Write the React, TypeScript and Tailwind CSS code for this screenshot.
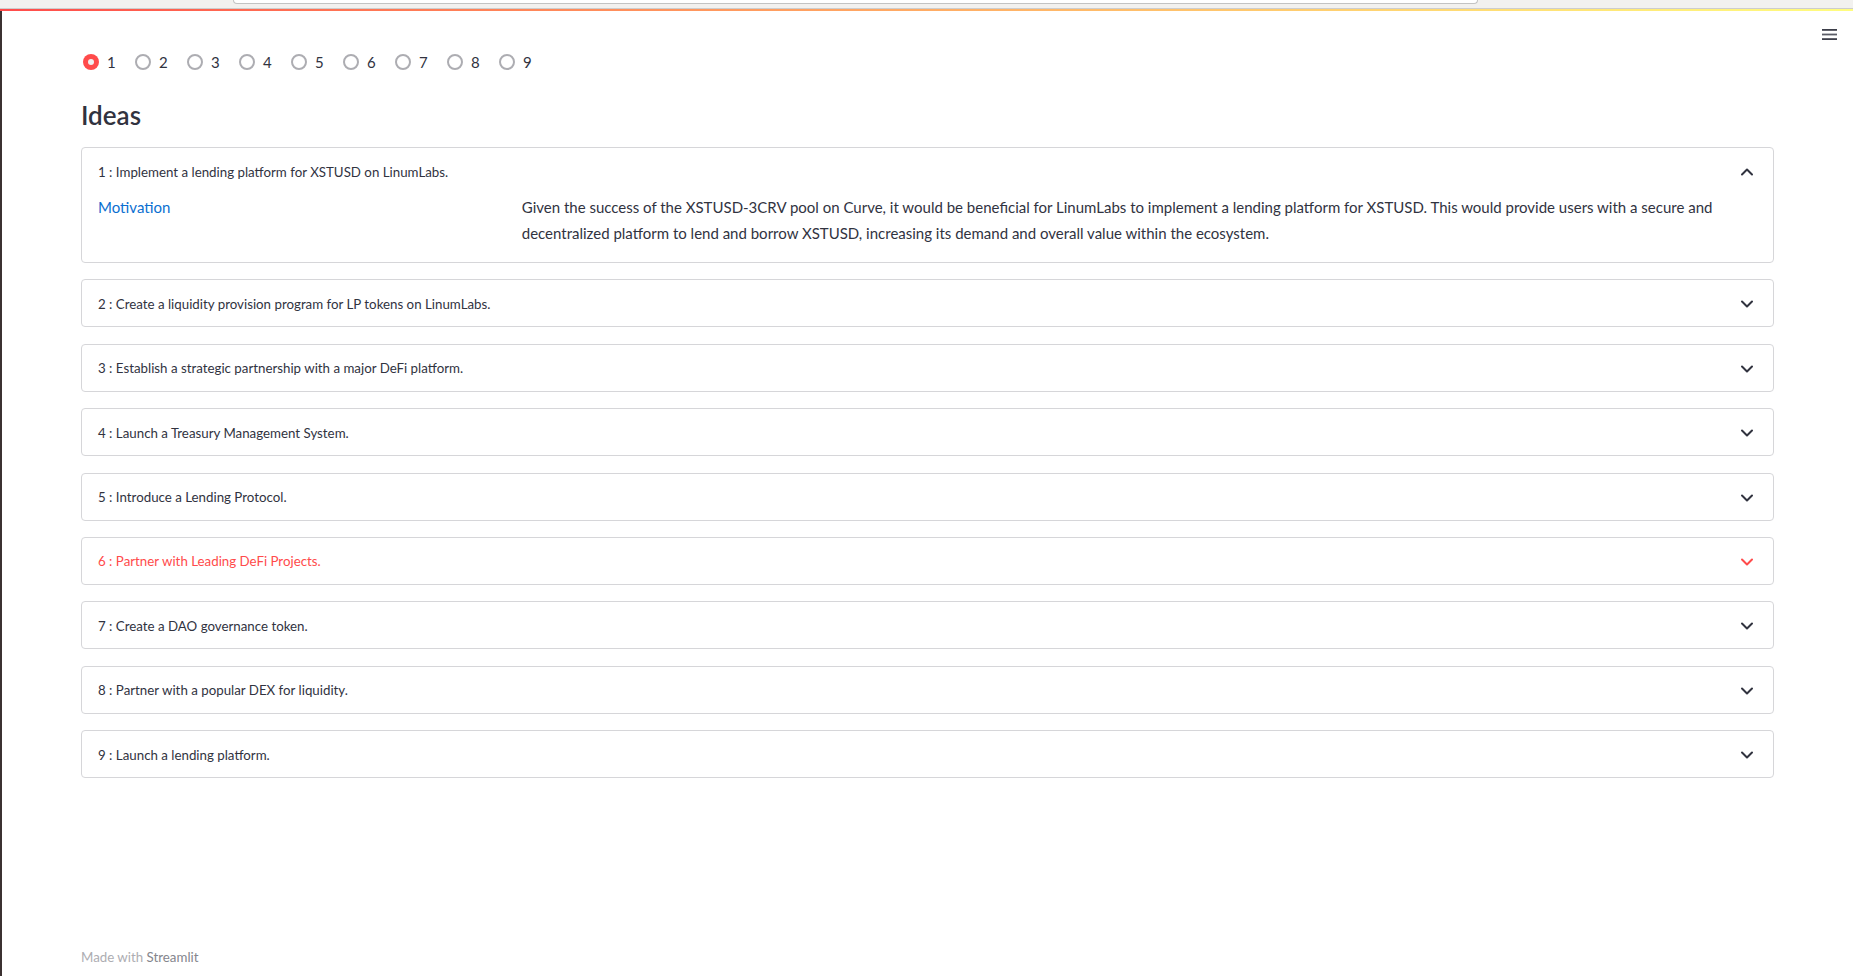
import { ChevronDown, ChevronUp } from 'lucide-react';

const ideas = [
  'Implement a lending platform for XSTUSD on LinumLabs.',
  'Create a liquidity provision program for LP tokens on LinumLabs.',
  'Establish a strategic partnership with a major DeFi platform.',
  'Launch a Treasury Management System.',
  'Introduce a Lending Protocol.',
  'Partner with Leading DeFi Projects.',
  'Create a DAO governance token.',
  'Partner with a popular DEX for liquidity.',
  'Launch a lending platform.',
];

const motivation =
  'Given the success of the XSTUSD-3CRV pool on Curve, it would be beneficial for LinumLabs to implement a lending platform for XSTUSD. This would provide users with a secure and decentralized platform to lend and borrow XSTUSD, increasing its demand and overall value within the ecosystem.';

function RadioRow() {
  return (
    <div className="flex items-center gap-[19px] pl-[2px]">
      {ideas.map((_, i) => (
        <div key={i} className="flex items-center gap-[8px] h-6">
          {i === 0 ? (
            <span className="w-4 h-4 rounded-full bg-[#ff4b4b] flex items-center justify-center">
              <span className="w-[6px] h-[6px] rounded-full bg-[#f0f0f0]" />
            </span>
          ) : (
            <span className="w-4 h-4 rounded-full border-2 border-[#adadb2]" />
          )}
          <span className="text-[15px] leading-6 text-[#31333f] w-[9px]">{i + 1}</span>
        </div>
      ))}
    </div>
  );
}

function Expander({ index, title }: { index: number; title: string }) {
  const open = index === 0;
  const hover = index === 5;
  return (
    <div className="border border-[#d6d6d9] rounded-[4px] bg-white">
      <div
        className={`h-[46px] px-4 pt-[3px] flex items-center justify-between text-[13.3px] ${
          hover ? 'text-[#ff4b4b]' : 'text-[#31333f]'
        }`}
      >
        <span>
          {index + 1} : {title}
        </span>
        {open ? (
          <ChevronUp size={20} strokeWidth={2.4} className="text-[#31333f] -mt-[1px]" />
        ) : (
          <ChevronDown size={20} strokeWidth={2.4} className={hover ? 'text-[#ff4b4b] -mt-[1px]' : 'text-[#31333f] -mt-[1px]'} />
        )}
      </div>
      {open && (
        <div className="px-4 pb-[16px] grid grid-cols-[1fr_3fr] gap-3 text-[15px] leading-[26px]">
          <div className="text-[#0b6fd1]">Motivation</div>
          <p className="text-[#31333f]">{motivation}</p>
        </div>
      )}
    </div>
  );
}

export default function App() {
  return (
    <div className="h-screen flex flex-col bg-white font-['Lato',sans-serif] overflow-hidden">
      {/* browser chrome strip */}
      <div className="h-[8px] bg-[#f2f1ef] flex pl-[233px] shrink-0">
        <div className="w-[1245px] h-[4px] border-x border-b border-[#c3c3c3] rounded-b-[4px] bg-white" />
      </div>
      <div className="h-px bg-[#cdcdcd] shrink-0" />
      <div className="h-[2px] bg-linear-to-r from-[#ff4b4b] to-[#fffd80] shrink-0" />

      <div className="relative flex-1 flex flex-col border-l-2 border-[#3b3131] pl-[79px] pr-[79px]">
        <button className="absolute top-[18px] right-[16px]">
          <svg width="15" height="11" viewBox="0 0 15 11">
            <rect x="0" y="0" width="15" height="1.8" fill="#3d3f4a" />
            <rect x="0" y="4.6" width="15" height="1.8" fill="#5a5c66" />
            <rect x="0" y="9.2" width="15" height="1.8" fill="#3d3f4a" />
          </svg>
        </button>

        <div className="mt-[39px]">
          <RadioRow />
        </div>

        <h2 className="mt-[25px] text-[26px] leading-[32px] font-semibold text-[#31333f]">Ideas</h2>

        <div className="mt-[16px] flex flex-col gap-[16.4px]">
          {ideas.map((t, i) => (
            <Expander key={i} index={i} title={t} />
          ))}
        </div>

        <div className="mt-auto pb-[9px] text-[13.3px] leading-5">
          <span className="text-[#adadb2]">Made with </span>
          <span className="text-[#85868d]">Streamlit</span>
        </div>
      </div>
    </div>
  );
}
